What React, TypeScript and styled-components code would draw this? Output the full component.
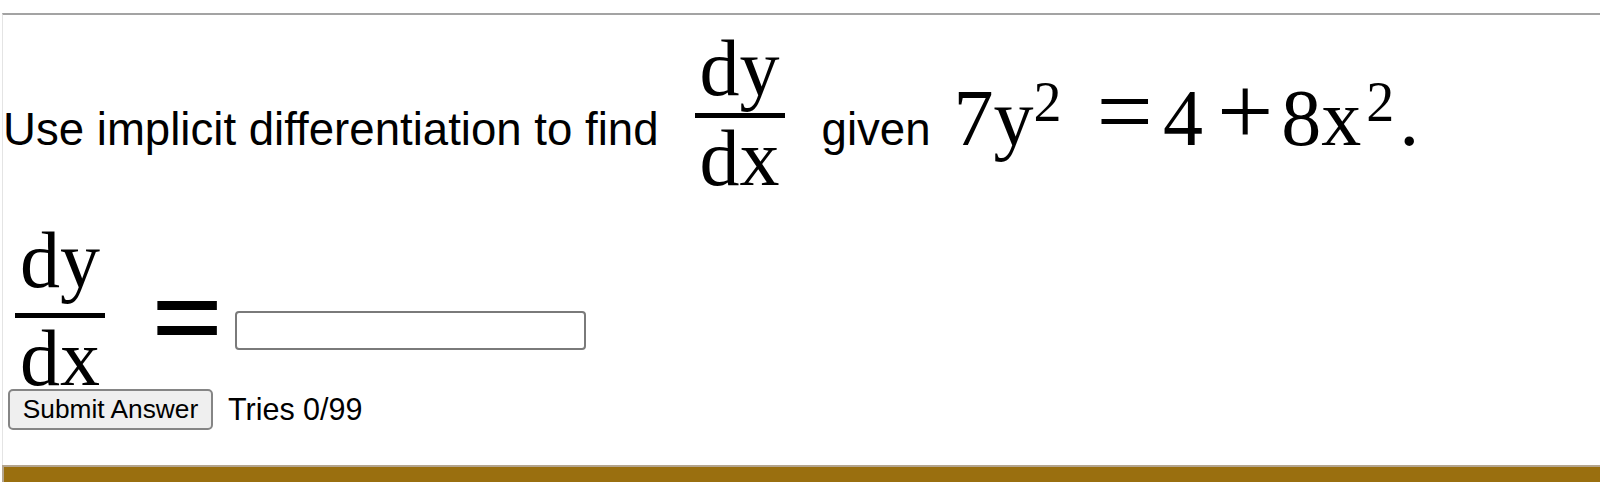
import React from 'react';
import styled, { createGlobalStyle } from 'styled-components';

const GlobalStyle = createGlobalStyle`
  html, body {
    margin: 0;
    padding: 0;
    background: #fff;
  }
  body {
    font-family: "Liberation Sans", Arial, sans-serif;
    color: #000;
    overflow: hidden;
  }
`;

const Page = styled.div`
  padding-top: 13px;
`;

const Frame = styled.div`
  margin-left: 2px;
  height: 450px;
  border-top: 2px solid #a3a3a3;
  border-left: 1px solid #e4e4e4;
  overflow: hidden;
`;

const Question = styled.p`
  margin: 0;
  padding-top: 13px;
  font-size: 45.6px;
  white-space: nowrap;
`;

const Frac = styled.span<{ $raise?: number }>`
  display: inline-flex;
  flex-direction: column;
  align-items: center;
  vertical-align: ${({ $raise }) => ($raise ? `${$raise}px` : 'baseline')};
  font-family: "Liberation Serif", "Times New Roman", serif;
  font-size: 80px;
`;

const FracPart = styled.span<{ $mb?: number }>`
  display: block;
  padding: 0 5px;
  line-height: 80px;
  margin-bottom: ${({ $mb }) => $mb ?? 0}px;
`;

const FracBar = styled.span<{ $gap: number }>`
  align-self: stretch;
  height: 5px;
  margin-top: ${({ $gap }) => $gap}px;
  background: #000;
`;

const Word = styled.span<{ $ml?: number }>`
  margin-left: ${({ $ml }) => $ml ?? 0}px;
`;

const MathExpr = styled.span`
  margin-left: 23px;
  font-family: "Liberation Serif", "Times New Roman", serif;
  font-size: 80px;
`;

const Sup = styled.span<{ $ml?: number; $mr?: number }>`
  font-size: 56px;
  vertical-align: 24px;
  margin-left: ${({ $ml }) => $ml ?? 0}px;
  margin-right: ${({ $mr }) => $mr ?? 0}px;
`;

const Op = styled.span<{ $ml: number; $mr: number }>`
  margin: 0 ${({ $mr }) => $mr}px 0 ${({ $ml }) => $ml}px;
  font-size: 100px;
`;

const AnswerRow = styled.div`
  display: flex;
  align-items: flex-start;
  margin-top: 22px;
  padding-left: 12px;
`;

const BigEquals = styled.span`
  margin-left: 46px;
  margin-top: 33px;
  font-family: "Liberation Serif", "Times New Roman", serif;
  font-weight: bold;
  font-size: 128px;
  line-height: 1;
`;

const AnswerInput = styled.input`
  box-sizing: border-box;
  width: 351px;
  height: 39px;
  margin: 91px 0 0 11px;
  padding: 2px 6px;
  border: 2px solid #7a7a7a;
  border-radius: 4px;
  font-family: "Liberation Sans", Arial, sans-serif;
  font-size: 26px;
  outline: none;
`;

const SubmitRow = styled.div`
  display: flex;
  align-items: center;
  gap: 15px;
  padding-left: 5px;
`;

const SubmitButton = styled.button`
  box-sizing: border-box;
  width: 205px;
  height: 41px;
  padding: 0;
  background: #efefef;
  border: 2px solid #858585;
  border-radius: 5px;
  color: #000;
  font-family: "Liberation Sans", Arial, sans-serif;
  font-size: 26.3px;
`;

const Tries = styled.span`
  font-size: 30.5px;
`;

const Footer = styled.div`
  margin-left: 2px;
  height: 15px;
  border-top: 2px solid #b4a58f;
  border-left: 2px solid #b4a58f;
  background: #9a6f0f;
`;

const DyDx = ({ raise, gap = 5, tail = 0 }: { raise?: number; gap?: number; tail?: number }) => (
  <Frac $raise={raise}>
    <FracPart>dy</FracPart>
    <FracBar $gap={gap} />
    <FracPart $mb={tail}>dx</FracPart>
  </Frac>
);

export default function App() {
  return (
    <Page>
      <GlobalStyle />
      <Frame>
        <Question>
          Use implicit differentiation to find
          <Word $ml={36} />
          <DyDx raise={50} />
          <Word $ml={37}>given</Word>
          <MathExpr>
            7y<Sup $mr={25}>2</Sup>
            <Op $ml={10} $mr={10}>=</Op>4<Op $ml={14} $mr={8}>+</Op>8x
            <Sup $ml={5} $mr={5}>2</Sup>.
          </MathExpr>
        </Question>
        <AnswerRow>
          <DyDx gap={13} tail={-9} />
          <BigEquals>=</BigEquals>
          <AnswerInput type="text" aria-label="dy/dx" />
        </AnswerRow>
        <SubmitRow>
          <SubmitButton type="button">Submit Answer</SubmitButton>
          <Tries>Tries 0/99</Tries>
        </SubmitRow>
      </Frame>
      <Footer />
    </Page>
  );
}
